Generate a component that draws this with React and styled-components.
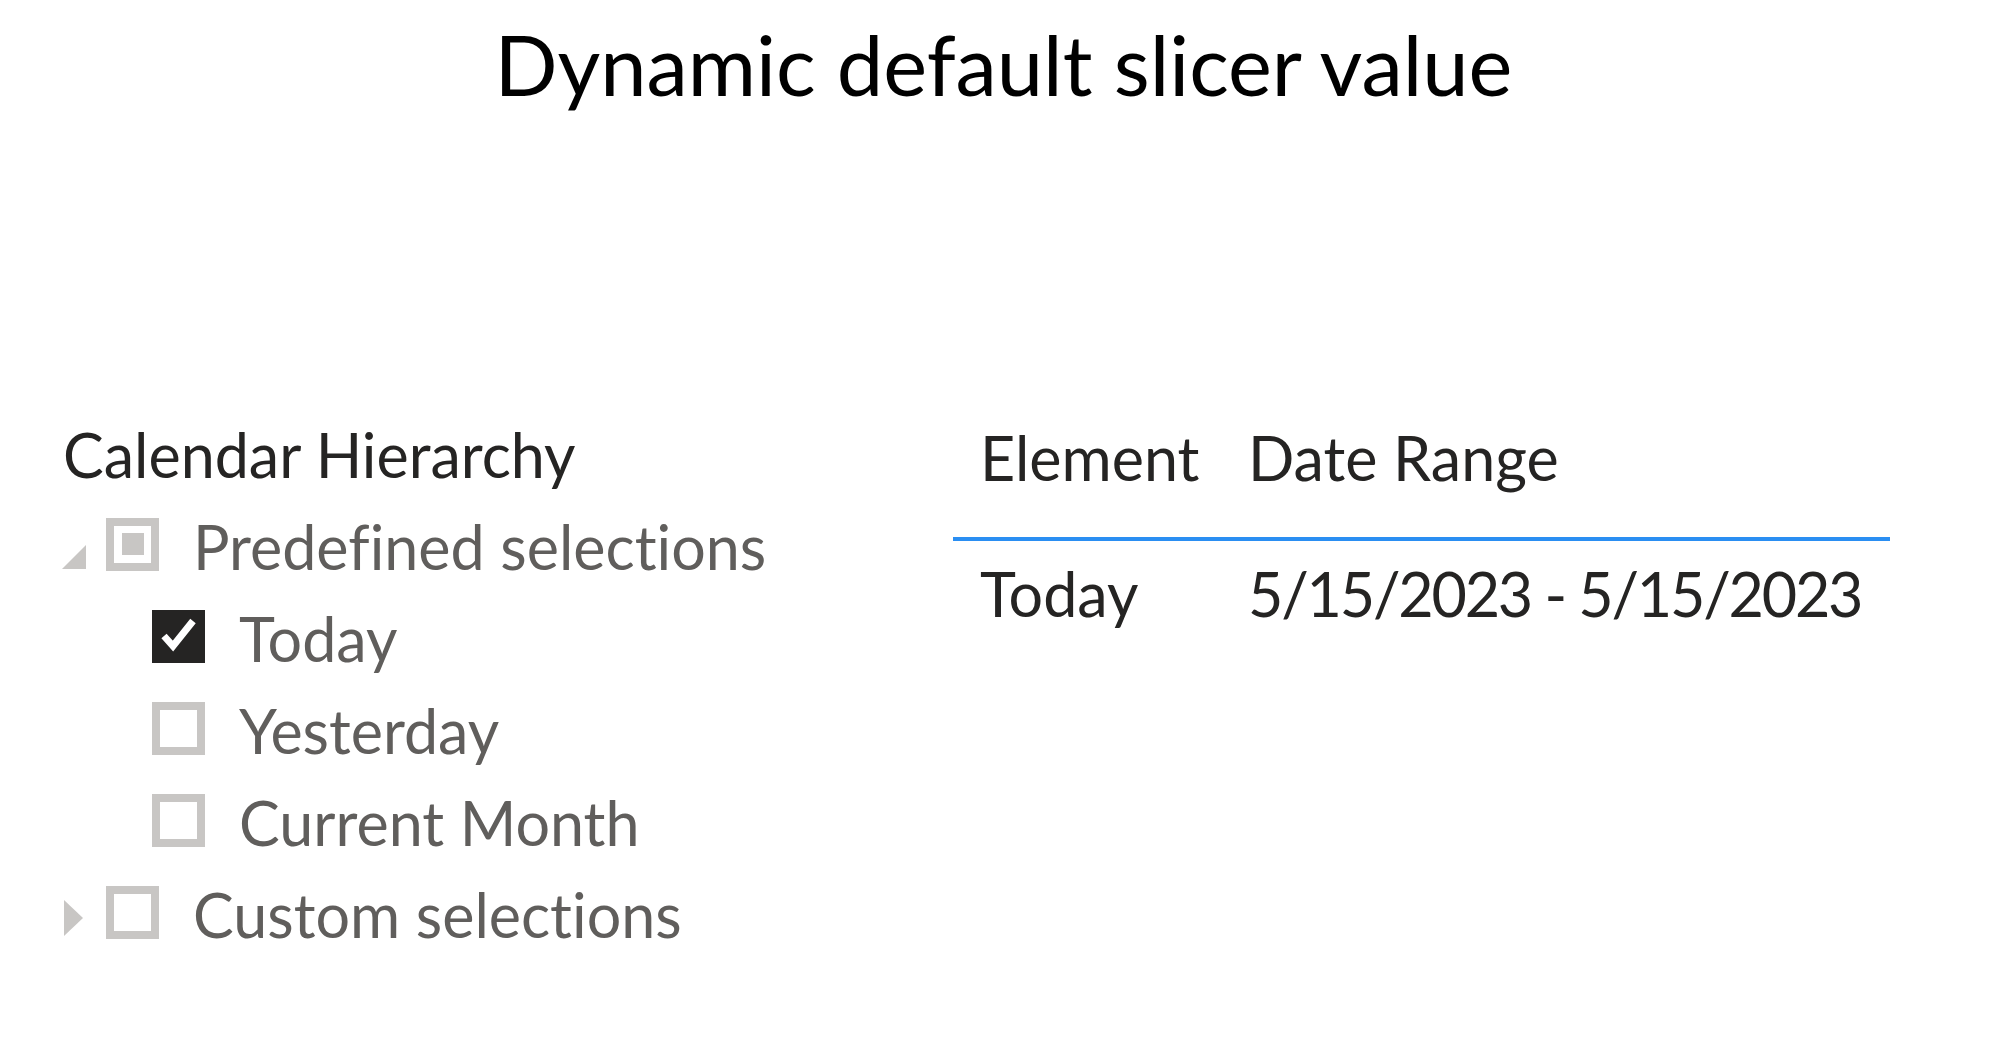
import React from "react";
import styled, { createGlobalStyle } from "styled-components";

const GlobalStyle = createGlobalStyle`
  html, body {
    margin: 0;
    padding: 0;
    background: #fff;
  }
  body {
    font-family: Lato, "Liberation Sans", sans-serif;
    font-variant-ligatures: none;
  }
`;

const Page = styled.div`
  width: 1989px;
  min-height: 1058px;
  display: flex;
  flex-direction: column;
`;

const Title = styled.h1`
  margin: 0;
  padding-top: 15px;
  font-family: Lato, "Liberation Sans", sans-serif;
  font-weight: 400;
  font-size: 83px;
  line-height: 98px;
  color: #000;
  text-align: center;
  padding-left: 18px;
`;

const Content = styled.div`
  display: flex;
  flex-direction: row;
  align-items: flex-start;
  padding-left: 62px;
  margin-top: 296px;
`;

const Slicer = styled.div`
  width: 891px;
  display: flex;
  flex-direction: column;
  font-size: 61px;
  line-height: 92px;
`;

const SlicerHeader = styled.div`
  color: #252423;
  height: 92px;
  padding-left: 1px;
`;

const Row = styled.div`
  height: 92px;
  display: flex;
  align-items: center;
  padding-left: ${(props) => (props.level === 1 ? "90px" : "0")};
  color: #605e5c;
`;

const Expander = styled.span`
  width: 24px;
  height: 36px;
  margin-right: 20px;
  display: flex;
  align-items: ${(props) => (props.open ? "flex-end" : "center")};
  padding-left: ${(props) => (props.open ? "0" : "2px")};
  box-sizing: border-box;
  margin-bottom: ${(props) => (props.open ? "-8px" : "-6px")};
`;

const Box = styled.span`
  box-sizing: border-box;
  width: 53px;
  height: 53px;
  flex-shrink: 0;
  border: 8px solid ${(props) => (props.checked ? "#252423" : "#c8c6c4")};
  background: ${(props) => (props.checked ? "#252423" : "#fff")};
  margin-right: 34px;
  margin-bottom: 6px;
  display: flex;
  align-items: center;
  justify-content: center;
`;

const Partial = styled.span`
  width: 22px;
  height: 22px;
  background: #c8c6c4;
`;

const Label = styled.span`
  white-space: nowrap;
`;

const Table = styled.div`
  width: 937px;
  display: flex;
  flex-direction: column;
  font-size: 61px;
  line-height: 92px;
  color: #252423;
`;

const HeadRow = styled.div`
  display: grid;
  grid-template-columns: 268px 1fr;
  padding-top: 3px;
  padding-bottom: 33px;
  border-bottom: 4px solid #2a8ef2;
`;

const BodyRow = styled.div`
  display: grid;
  grid-template-columns: 268px 1fr;
  padding-top: 7px;
`;

const Cell = styled.div`
  padding-left: 27px;
  white-space: nowrap;
  letter-spacing: ${(props) => (props.numeric ? "-2.2px" : "normal")};
`;

const Triangle = ({ open }) =>
  open ? (
    <svg width="24" height="24" viewBox="0 0 24 24">
      <polygon points="0,24 24,24 24,0" fill="#c8c6c4" />
    </svg>
  ) : (
    <svg width="19" height="36" viewBox="0 0 19 36">
      <polygon points="0,0 19,18 0,36" fill="#c8c6c4" />
    </svg>
  );

const CheckMark = () => (
  <svg width="37" height="37" viewBox="0 0 37 37" style={{ marginTop: -2 }}>
    <polyline
      points="4,19 13,29 33,4"
      fill="none"
      stroke="#fff"
      strokeWidth="7"
      strokeLinejoin="miter"
    />
  </svg>
);

const items = [
  { label: "Predefined selections", level: 0, expander: "open", state: "partial" },
  { label: "Today", level: 1, state: "checked" },
  { label: "Yesterday", level: 1, state: "empty" },
  { label: "Current Month", level: 1, state: "empty" },
  { label: "Custom selections", level: 0, expander: "closed", state: "empty" },
];

const rows = [{ element: "Today", range: "5/15/2023 - 5/15/2023" }];

const App = () => {
  return (
    <Page>
      <GlobalStyle />
      <Title>Dynamic default slicer value</Title>
      <Content>
        <Slicer>
          <SlicerHeader>Calendar Hierarchy</SlicerHeader>
          {items.map((item, index) => (
            <Row key={index} level={item.level}>
              {item.level === 0 ? (
                <Expander open={item.expander === "open"}>
                  <Triangle open={item.expander === "open"} />
                </Expander>
              ) : null}
              <Box checked={item.state === "checked"}>
                {item.state === "partial" ? <Partial /> : null}
                {item.state === "checked" ? <CheckMark /> : null}
              </Box>
              <Label>{item.label}</Label>
            </Row>
          ))}
        </Slicer>
        <Table>
          <HeadRow>
            <Cell>Element</Cell>
            <Cell>Date Range</Cell>
          </HeadRow>
          {rows.map((row, index) => (
            <BodyRow key={index}>
              <Cell>{row.element}</Cell>
              <Cell numeric>{row.range}</Cell>
            </BodyRow>
          ))}
        </Table>
      </Content>
    </Page>
  );
};

export default App;
